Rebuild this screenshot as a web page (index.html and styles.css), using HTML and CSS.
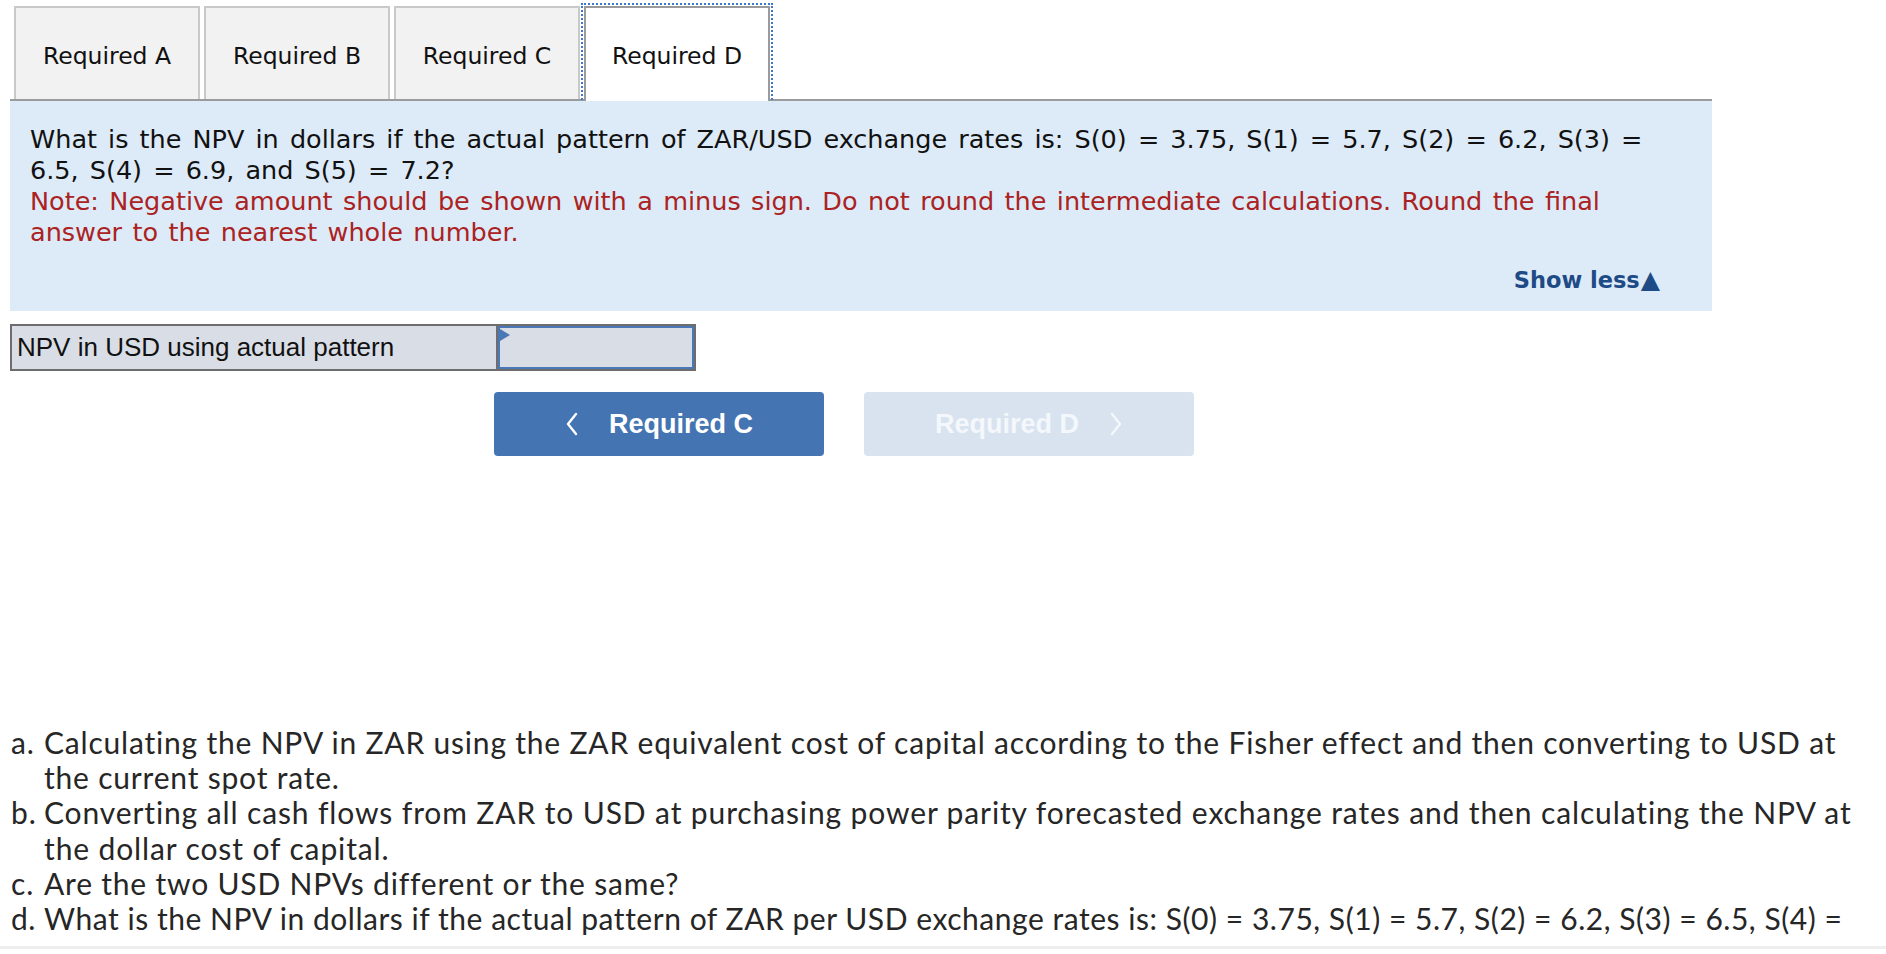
FILE: index.html
```html
<!DOCTYPE html>
<html lang="en">
<head>
<meta charset="utf-8">
<title>Required D</title>
<link rel="stylesheet" href="styles.css">
</head>
<body>
<div class="page">
  <div class="tabs">
    <div class="tab">Required A</div>
    <div class="tab">Required B</div>
    <div class="tab">Required C</div>
    <div class="tab active">Required D</div>
  </div>
  <div class="panel">
    <p class="question">What is the NPV in dollars if the actual pattern of ZAR/USD exchange rates is: S(0) = 3.75, S(1) = 5.7, S(2) = 6.2, S(3) = 6.5, S(4) = 6.9, and S(5) = 7.2?</p>
    <p class="note">Note: Negative amount should be shown with a minus sign. Do not round the intermediate calculations. Round the final answer to the nearest whole number.</p>
    <div class="showless">Show less<span class="tri">&#9650;</span></div>
  </div>
  <div class="answer">
    <div class="label">NPV in USD using actual pattern</div>
    <div class="cell"><div class="input"><span class="flag"></span></div></div>
  </div>
  <div class="nav">
    <div class="btn prev">
      <svg class="chev" width="14" height="24" viewBox="0 0 14 24"><path d="M11 2 L3 12 L11 22" fill="none" stroke="#fff" stroke-width="2.4" stroke-linecap="round" stroke-linejoin="round"/></svg>
      <span>Required C</span>
    </div>
    <div class="btn next">
      <span>Required D</span>
      <svg class="chev" width="14" height="24" viewBox="0 0 14 24"><path d="M3 2 L11 12 L3 22" fill="none" stroke="#fff" stroke-width="2.4" stroke-linecap="round" stroke-linejoin="round"/></svg>
    </div>
  </div>
  <ol class="parts">
    <li><span class="mk">a.</span><span>Calculating the NPV in ZAR using the ZAR equivalent cost of capital according to the Fisher effect and then converting to USD at the current spot rate.</span></li>
    <li class="b"><span class="mk">b.</span><span>Converting all cash flows from ZAR to USD at purchasing power parity forecasted exchange rates and then calculating the NPV at the dollar cost of capital.</span></li>
    <li><span class="mk">c.</span><span>Are the two USD NPVs different or the same?</span></li>
    <li class="last"><span class="mk">d.</span><span>What is the NPV in dollars if the actual pattern of ZAR per USD exchange rates is: S(0) = 3.75, S(1) = 5.7, S(2) = 6.2, S(3) = 6.5, S(4) =</span></li>
  </ol>
  <div class="footbar"></div>
</div>
</body>
</html>
```
FILE: styles.css
```css
html, body {
  margin: 0;
  padding: 0;
  background: #fff;
}
body {
  width: 1886px;
  height: 954px;
  overflow: hidden;
  font-family: "DejaVu Sans", Verdana, sans-serif;
  color: #111;
}
.page {
  display: flex;
  flex-direction: column;
  height: 954px;
}
.tabs {
  display: flex;
  gap: 4px;
  margin: 0 174px 0 10px;
  padding: 6px 0 0 4px;
  border-bottom: 2px solid #9b9b9b;
}
.tab {
  width: 182px;
  height: 87px;
  border: 2px solid #c9c9c9;
  border-bottom: none;
  background: #f2f2f2;
  display: flex;
  align-items: center;
  justify-content: center;
  font-size: 23.5px;
  color: #111;
  padding-top: 4px;
  box-sizing: content-box;
}
.tab.active {
  background: #fff;
  border-color: #9b9b9b;
  margin-bottom: -2px;
  height: 90px;
  padding-top: 3px;
  outline: 2px dotted #3b78d0;
  outline-offset: 1px;
}
.panel {
  margin: 0 174px 0 10px;
  background: #ddeaf7;
  padding: 22.5px 52px 17px 20px;
  height: 170.5px;
}
.question, .note {
  margin: 0;
  font-size: 25.5px;
  line-height: 31px;
}
.question {
  color: #111;
  word-spacing: 3px;
}
.note {
  color: #ab2222;
  word-spacing: 2.3px;
}
.showless {
  margin-top: 17px;
  text-align: right;
  font-weight: bold;
  font-size: 22.5px;
  line-height: 30px;
  color: #1e4a86;
}
.tri {
  font-size: 25px;
  margin-left: 1px;
}
.answer {
  margin: 13px 0 0 10px;
  display: flex;
  width: 682px;
  height: 43px;
  border: 2px solid #6d6d6d;
  background: #d9dde6;
  font-family: "Liberation Sans", Arial, sans-serif;
}
.label {
  width: 479px;
  border-right: 2px solid #6d6d6d;
  font-size: 26px;
  line-height: 43px;
  padding-left: 5px;
  color: #111;
  white-space: nowrap;
  overflow: hidden;
}
.cell {
  flex: 1;
  display: flex;
}
.input {
  flex: 1;
  border: 2px solid #4a78b6;
  position: relative;
}
.flag {
  position: absolute;
  left: 0;
  top: 1px;
  width: 0;
  height: 0;
  border-top: 6px solid transparent;
  border-bottom: 6px solid transparent;
  border-left: 10px solid #4a78b6;
}
.nav {
  display: flex;
  gap: 40px;
  margin: 21px 0 0 494px;
  font-family: "Liberation Sans", Arial, sans-serif;
}
.btn {
  width: 330px;
  height: 64px;
  border-radius: 4px;
  display: flex;
  align-items: center;
  justify-content: center;
  gap: 30px;
  font-size: 27px;
  font-weight: bold;
  color: #fff;
}
.btn.prev { background: #4474b2; }
.btn.next { background: #d8e3ef; color: #f4f7fb; }
.btn.next .chev path { stroke: #f4f7fb; }
.parts {
  list-style: none;
  margin: 269px 0 0 0;
  padding: 0 24px 0 11px;
  font-family: Lato, "Open Sans", sans-serif;
  font-size: 30px;
  letter-spacing: 0.8px;
  line-height: 35.2px;
  color: #262626;
}
.parts li {
  display: flex;
}
.parts li.b {
  letter-spacing: 0.88px;
}
.parts li.last {
  letter-spacing: 0.53px;
  white-space: nowrap;
}
.mk {
  flex: none;
  width: 33px;
}
.footbar {
  margin-top: auto;
  margin-bottom: 5px;
  height: 3px;
  background: #eeeeee;
}
```
